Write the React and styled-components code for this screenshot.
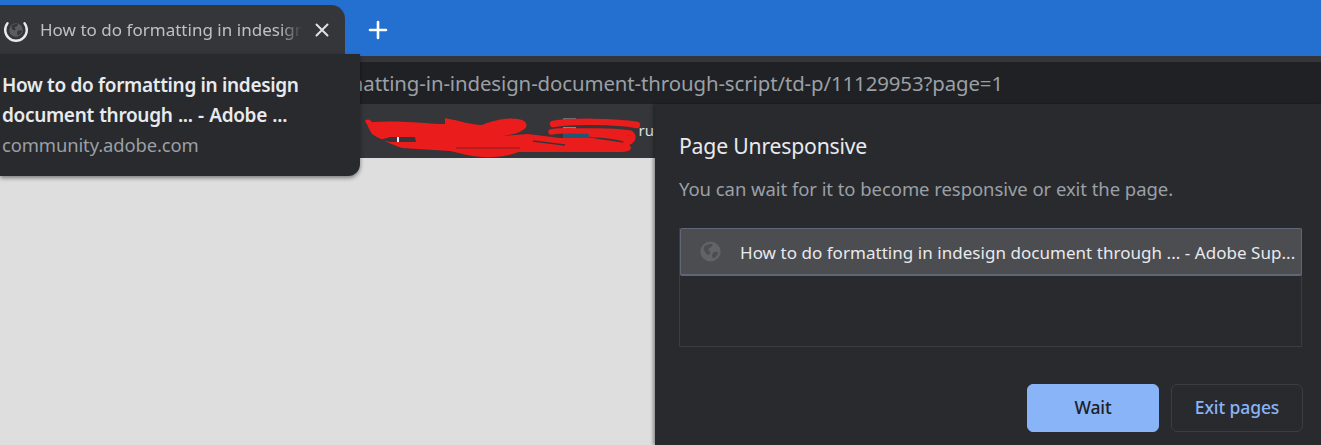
import React from "react";
import styled, { createGlobalStyle } from "styled-components";

const Global = createGlobalStyle`
  html, body { margin: 0; padding: 0; background: #202124; }
  #root { width: 1321px; height: 445px; overflow: hidden; }
  * { box-sizing: border-box; }
`;

const Page = styled.div`
  position: relative;
  width: 1321px;
  height: 445px;
  display: flex;
  flex-direction: column;
  overflow: hidden;
  font-family: "Noto Sans", "Open Sans", sans-serif;
`;

const TabStrip = styled.div`
  height: 56px;
  flex: none;
  background: #2470d0;
  padding-top: 5px;
  display: flex;
  align-items: stretch;
`;

const Tab = styled.div`
  width: 345px;
  background: #35363a;
  border-radius: 0 14px 0 0;
  display: flex;
  align-items: center;
  padding: 0 16px 2px 3px;
`;

const TabTitle = styled.span`
  margin-left: 11px;
  width: 262px;
  flex: none;
  white-space: nowrap;
  overflow: hidden;
  font-size: 17px;
  letter-spacing: 0.02px;
  color: #bdc1c6;
  -webkit-mask-image: linear-gradient(to right, #000 240px, transparent 262px);
  mask-image: linear-gradient(to right, #000 240px, transparent 262px);
`;

const TabClose = styled.svg`
  margin-left: 13px;
  width: 14px;
  height: 14px;
  flex: none;
`;

const NewTab = styled.svg`
  margin: 15px 0 0 23px;
  width: 20px;
  height: 20px;
  flex: none;
`;

const Toolbar = styled.div`
  height: 48px;
  flex: none;
  background: #35363a;
  padding-top: 6px;
`;

const UrlBar = styled.div`
  height: 42px;
  background: #202124;
  display: flex;
  align-items: center;
  justify-content: flex-end;
  padding-right: 318px;
  overflow: hidden;
  white-space: nowrap;
  font-size: 20.4px;
  letter-spacing: -0.1px;
  color: #9aa0a6;
`;

const Body = styled.div`
  flex: 1;
  display: flex;
  min-height: 0;
`;

const LeftColumn = styled.div`
  flex: 1;
  display: flex;
  flex-direction: column;
  position: relative;
`;

const BookmarksBar = styled.div`
  height: 54px;
  flex: none;
  background: #35363a;
  position: relative;
  display: flex;
  align-items: center;
  justify-content: flex-end;
  padding: 0 1px 2px 0;
  overflow: hidden;
`;

const BookmarkLabel = styled.span`
  font-size: 15px;
  color: #dfe1e5;
  white-space: nowrap;
`;

const Scribble = styled.svg`
  position: absolute;
  left: 360px;
  top: 8px;
  width: 295px;
  height: 52px;
`;

const Content = styled.div`
  flex: 1;
  background: #dedede;
`;

const Dialog = styled.section`
  width: 666px;
  flex: none;
  background: #292a2d;
  box-shadow: -2px 0 3px rgba(0, 0, 0, 0.35);
  padding: 27px 18px 13px 24px;
  display: flex;
  flex-direction: column;
  position: relative;
`;

const DialogTitle = styled.h2`
  margin: 0;
  font-size: 21.2px;
  font-weight: 400;
  line-height: 30px;
  color: #e8eaed;
  letter-spacing: -0.2px;
`;

const DialogText = styled.p`
  margin: 15px 0 0;
  font-size: 18.5px;
  line-height: 26px;
  letter-spacing: -0.06px;
  color: #9aa0a6;
`;

const PageList = styled.div`
  margin: 26px 1px 0 0;
  height: 119px;
  border: 1px solid #3c3d41;
  border-top: none;
`;

const PageRow = styled.div`
  height: 48px;
  margin: 0 -1px 0 0;
  background: #4c4d51;
  border: 1px solid #5f6675;
  border-bottom-width: 2px;
  border-radius: 2px;
  display: flex;
  align-items: center;
  padding-left: 19px;
  font-size: 17px;
  letter-spacing: 0.04px;
  white-space: nowrap;
  color: #e8eaed;
`;

const RowTitle = styled.span`
  margin: 1px 0 0 19px;
`;

const Actions = styled.div`
  margin-top: 37px;
  display: flex;
  justify-content: flex-end;
  gap: 12px;
`;

const Button = styled.button`
  width: 132px;
  height: 48px;
  border-radius: 6px;
  font: 500 17.5px "Noto Sans", "Open Sans", sans-serif;
  letter-spacing: -0.1px;
  padding: 0 0 3px 0;
  border: 1px solid ${(p) => (p.$primary ? "#8ab4f8" : "#3c3d41")};
  background: ${(p) => (p.$primary ? "#8ab4f8" : "transparent")};
  color: ${(p) => (p.$primary ? "#202124" : "#8ab4f8")};
`;

const Tooltip = styled.div`
  position: absolute;
  left: 0;
  top: 54px;
  width: 360px;
  height: 122px;
  background: #292a2d;
  border-radius: 0 0 12px 0;
  box-shadow: 0 2px 4px rgba(0, 0, 0, 0.45);
  padding: 16px 0 0 2px;
  z-index: 2;
`;

const TipTitle = styled.div`
  font-size: 19px;
  font-weight: 600;
  line-height: 30px;
  letter-spacing: -0.33px;
  word-spacing: ${(p) => p.$wordGap || 0}px;
  color: #e8eaed;
`;

const TipHost = styled.div`
  font-size: 18.4px;
  line-height: 30px;
  letter-spacing: -0.1px;
  color: #9aa0a6;
`;

const Globe = ({ size, color, hole }) => (
  <svg width={size} height={size} viewBox="0 0 24 24" style={{ flex: "none" }}>
    <circle cx="12" cy="12" r="11.5" fill={color} />
    <path d="M5 6c3-2 6-3 9-3 1 2-1 4-3 5-2 1-2 2-1 3 2 1 2 3 0 5-3-1-4-3-5-5-1-2-1-3 0-5zM15 13c2-1 4-1 6 0-1 3-3 6-6 7-2-2-1-5 0-7z" fill={hole} />
  </svg>
);

const Spinner = () => (
  <svg width="26" height="26" viewBox="0 0 26 26" style={{ flex: "none" }}>
    <circle cx="13" cy="13" r="6.8" fill="#5a5c60" />
    <path d="M9 8.5c2-1.2 4-1.8 6-1.6 0 1.6-1.5 2.6-3 3.2-1 .6 0 1.4.8 2.4-.8 1.2-2.6 1-3.6-.6-.7-1.2-.8-2.4-.2-3.4zM14.5 14c1.6-.6 3-.6 4.6-.4-.4 2.2-2 4-4 5-1.2-1.2-1.2-3-.6-4.6z" fill="#35363a" />
    <path d="M21.5 6.3A10.8 10.8 0 1 1 4.5 6.3" fill="none" stroke="#e8eaed" strokeWidth="2.4" strokeLinecap="round" />
  </svg>
);

export default function App() {
  return (
    <Page>
      <Global />
      <TabStrip>
        <Tab>
          <Spinner />
          <TabTitle>How to do formatting in indesign document through</TabTitle>
          <TabClose viewBox="0 0 14 14">
            <path d="M1.5 1.5l11 11M12.5 1.5l-11 11" stroke="#dfe1e5" strokeWidth="2" strokeLinecap="round" />
          </TabClose>
        </Tab>
        <NewTab viewBox="0 0 20 20">
          <path d="M10 2v16M2 10h16" stroke="#fff" strokeWidth="2.6" strokeLinecap="round" />
        </NewTab>
      </TabStrip>
      <Toolbar>
        <UrlBar>community.adobe.com/t5/indesign-discussions/how-to-do-formatting-in-indesign-document-through-script/td-p/11129953?page=1</UrlBar>
      </Toolbar>
      <Body>
        <LeftColumn>
          <BookmarksBar>
            <BookmarkLabel>ru</BookmarkLabel>
            <Scribble viewBox="0 0 295 52">
              <rect x="203" y="20" width="27" height="9" fill="#1a5a78" />
              <rect x="203" y="6" width="13" height="3" fill="#6e7074" />
              <rect x="203" y="15" width="13" height="2" fill="#85878b" />
              <path d="M5 9 C8 6 10 8 12 10 C40 8 70 12 85 12 L85 6 C100 9 112 13 122 13 C132 9 145 5 158 7 C170 9 170 18 154 22 L143 24 L168 22 L200 26 L232 26 L266 31 C274 35 272 40 262 40 L205 40 L158 40 C150 44 135 46 122 45 C108 44 100 41 90 39 L42 36 C28 31 18 26 12 22 C9 18 8 13 5 9 Z" fill="#ea1c1c" />
              <path d="M20 28 L30 25 L55 25 L56 30 L30 30 Z" fill="#35363a" />
              <rect x="37" y="25" width="2" height="5" fill="#e8eaed" />
              <path d="M173 29 L205 33" fill="none" stroke="#35363a" strokeWidth="1.5" />
              <path d="M193 12 C210 9 255 9 277 13" fill="none" stroke="#ea1c1c" strokeWidth="6.5" strokeLinecap="round" />
              <path d="M191 20 C200 18 215 19 225 19 C240 19 250 18 270 21 C276 24 272 30 266 31" fill="none" stroke="#ea1c1c" strokeWidth="5.5" strokeLinecap="round" />
              <path d="M232 22 C245 22 258 24 268 27" fill="none" stroke="#ea1c1c" strokeWidth="7" strokeLinecap="round" />
              <path d="M96 36 L160 36" fill="none" stroke="#7d1f20" strokeWidth="1" />
            </Scribble>
          </BookmarksBar>
          <Content />
        </LeftColumn>
        <Dialog>
          <DialogTitle>Page Unresponsive</DialogTitle>
          <DialogText>You can wait for it to become responsive or exit the page.</DialogText>
          <PageList>
            <PageRow>
              <Globe size={21} color="#626367" hole="#4c4d51" />
              <RowTitle>How to do formatting in indesign document through ... - Adobe Sup...</RowTitle>
            </PageRow>
          </PageList>
          <Actions>
            <Button $primary>Wait</Button>
            <Button>Exit pages</Button>
          </Actions>
        </Dialog>
      </Body>
      <Tooltip>
        <TipTitle>How to do formatting in indesign</TipTitle>
        <TipTitle $wordGap={0.8}>document through ... - Adobe ...</TipTitle>
        <TipHost>community.adobe.com</TipHost>
      </Tooltip>
    </Page>
  );
}
